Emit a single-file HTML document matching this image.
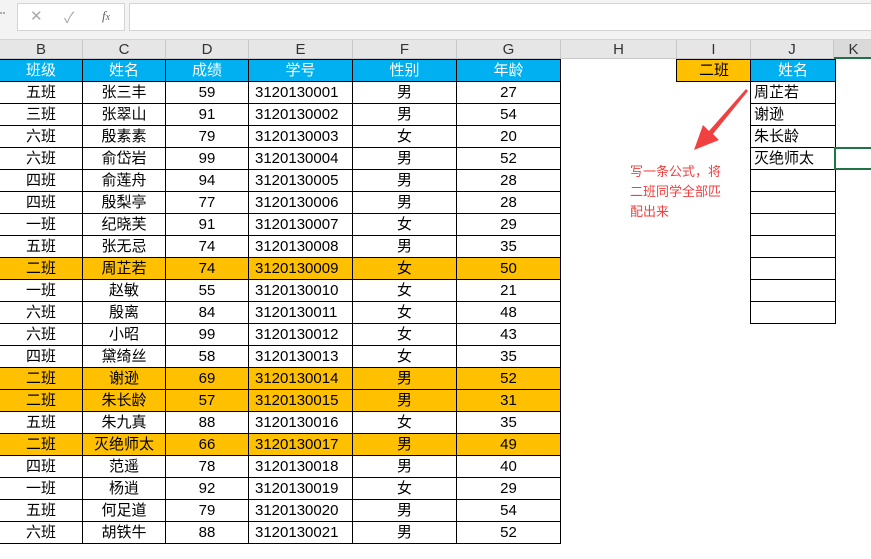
<!DOCTYPE html><html><head><meta charset="utf-8"><style>
*{margin:0;padding:0;box-sizing:border-box}
body{width:871px;height:559px;overflow:hidden;background:#fff;font-family:"Liberation Sans","Noto Sans CJK SC",sans-serif;position:relative}
.top{position:absolute;left:0;top:0;width:871px;height:40px;background:#f3f3f3;border-bottom:1px solid #d4d4d4}
.box1{position:absolute;left:17px;top:3px;width:108px;height:28px;background:#fff;border:1px solid #d4d4d4;color:#aaa;font-size:15px}
.box2{position:absolute;left:129px;top:3px;width:750px;height:28px;background:#fff;border:1px solid #d4d4d4}
.ch{position:absolute;top:40px;height:19px;background:#e6e6e6;border-right:1px solid #c8c8c8;border-bottom:1px solid #c8c8c8;text-align:center;font-size:15px;line-height:19px;color:#333}
table{position:absolute;left:-1px;top:59px;border-collapse:collapse;table-layout:fixed}
td{height:22px;border:1px solid #000;text-align:center;font-size:15px;padding:0;line-height:20px;white-space:nowrap;overflow:hidden}
td.e{text-align:left;padding-left:6px}
tr.h td{background:#00b0f0;color:#fff}
tr.y td{background:#ffc000}
.j{position:absolute;left:750px;width:85px;border-collapse:collapse}
.j td{text-align:left;padding-left:3px}
.note{position:absolute;left:630px;top:162px;color:#f04040;font-size:13px;line-height:20px}
</style></head><body>
<div class="top">
<div style="position:absolute;left:0;top:12px;width:3px;height:10px;border-top:2px dotted #aaa"></div>
<div class="box1"><span style="position:absolute;left:12px;top:3px">✕</span><span style="position:absolute;left:46px;top:3px">✓</span><span style="position:absolute;left:84px;top:4px;font-family:'Liberation Serif',serif;font-style:italic;font-size:13px;color:#666">f<span style="font-size:10px">x</span></span></div>
<div class="box2"></div>
</div>
<div class="ch" style="left:0;width:83px">B</div>
<div class="ch" style="left:83px;width:83px">C</div>
<div class="ch" style="left:166px;width:83px">D</div>
<div class="ch" style="left:249px;width:104px">E</div>
<div class="ch" style="left:353px;width:104px">F</div>
<div class="ch" style="left:457px;width:104px">G</div>
<div class="ch" style="left:561px;width:116px">H</div>
<div class="ch" style="left:677px;width:74px">I</div>
<div class="ch" style="left:751px;width:83px">J</div>
<div class="ch" style="left:834px;width:40px;background:#dadada;border-bottom:2px solid #217346">K</div>
<table>
<colgroup><col style="width:83px"><col style="width:83px"><col style="width:83px"><col style="width:104px"><col style="width:104px"><col style="width:104px"></colgroup>
<tr class="h"><td>班级</td><td>姓名</td><td>成绩</td><td>学号</td><td>性别</td><td>年龄</td></tr>
<tr><td>五班</td><td>张三丰</td><td>59</td><td class="e">3120130001</td><td>男</td><td>27</td></tr>
<tr><td>三班</td><td>张翠山</td><td>91</td><td class="e">3120130002</td><td>男</td><td>54</td></tr>
<tr><td>六班</td><td>殷素素</td><td>79</td><td class="e">3120130003</td><td>女</td><td>20</td></tr>
<tr><td>六班</td><td>俞岱岩</td><td>99</td><td class="e">3120130004</td><td>男</td><td>52</td></tr>
<tr><td>四班</td><td>俞莲舟</td><td>94</td><td class="e">3120130005</td><td>男</td><td>28</td></tr>
<tr><td>四班</td><td>殷梨亭</td><td>77</td><td class="e">3120130006</td><td>男</td><td>28</td></tr>
<tr><td>一班</td><td>纪晓芙</td><td>91</td><td class="e">3120130007</td><td>女</td><td>29</td></tr>
<tr><td>五班</td><td>张无忌</td><td>74</td><td class="e">3120130008</td><td>男</td><td>35</td></tr>
<tr class="y"><td>二班</td><td>周芷若</td><td>74</td><td class="e">3120130009</td><td>女</td><td>50</td></tr>
<tr><td>一班</td><td>赵敏</td><td>55</td><td class="e">3120130010</td><td>女</td><td>21</td></tr>
<tr><td>六班</td><td>殷离</td><td>84</td><td class="e">3120130011</td><td>女</td><td>48</td></tr>
<tr><td>六班</td><td>小昭</td><td>99</td><td class="e">3120130012</td><td>女</td><td>43</td></tr>
<tr><td>四班</td><td>黛绮丝</td><td>58</td><td class="e">3120130013</td><td>女</td><td>35</td></tr>
<tr class="y"><td>二班</td><td>谢逊</td><td>69</td><td class="e">3120130014</td><td>男</td><td>52</td></tr>
<tr class="y"><td>二班</td><td>朱长龄</td><td>57</td><td class="e">3120130015</td><td>男</td><td>31</td></tr>
<tr><td>五班</td><td>朱九真</td><td>88</td><td class="e">3120130016</td><td>女</td><td>35</td></tr>
<tr class="y"><td>二班</td><td>灭绝师太</td><td>66</td><td class="e">3120130017</td><td>男</td><td>49</td></tr>
<tr><td>四班</td><td>范遥</td><td>78</td><td class="e">3120130018</td><td>男</td><td>40</td></tr>
<tr><td>一班</td><td>杨逍</td><td>92</td><td class="e">3120130019</td><td>女</td><td>29</td></tr>
<tr><td>五班</td><td>何足道</td><td>79</td><td class="e">3120130020</td><td>男</td><td>54</td></tr>
<tr><td>六班</td><td>胡铁牛</td><td>88</td><td class="e">3120130021</td><td>男</td><td>52</td></tr>
</table>
<table style="left:676px;width:75px"><tr class="y"><td style="border-right:none">二班</td></tr></table>
<table class="j" style="top:59px">
<colgroup><col style="width:85px"></colgroup>
<tr class="h"><td style="text-align:center;padding:0">姓名</td></tr>
<tr><td>周芷若</td></tr><tr><td>谢逊</td></tr><tr><td>朱长龄</td></tr><tr><td>灭绝师太</td></tr>
<tr><td></td></tr><tr><td></td></tr><tr><td></td></tr><tr><td></td></tr><tr><td></td></tr><tr><td></td></tr><tr><td></td></tr>
</table>
<div style="position:absolute;left:834px;top:147px;width:40px;height:23px;border:2px solid #217346"></div>
<svg style="position:absolute;left:0;top:0" width="871" height="559"><polygon points="748,91 746,89 709,131 703,125 694,150 719,140 713,134" fill="#f04040"/></svg>
<div class="note">写一条公式，将<br>二班同学全部匹<br>配出来</div>
</body></html>
